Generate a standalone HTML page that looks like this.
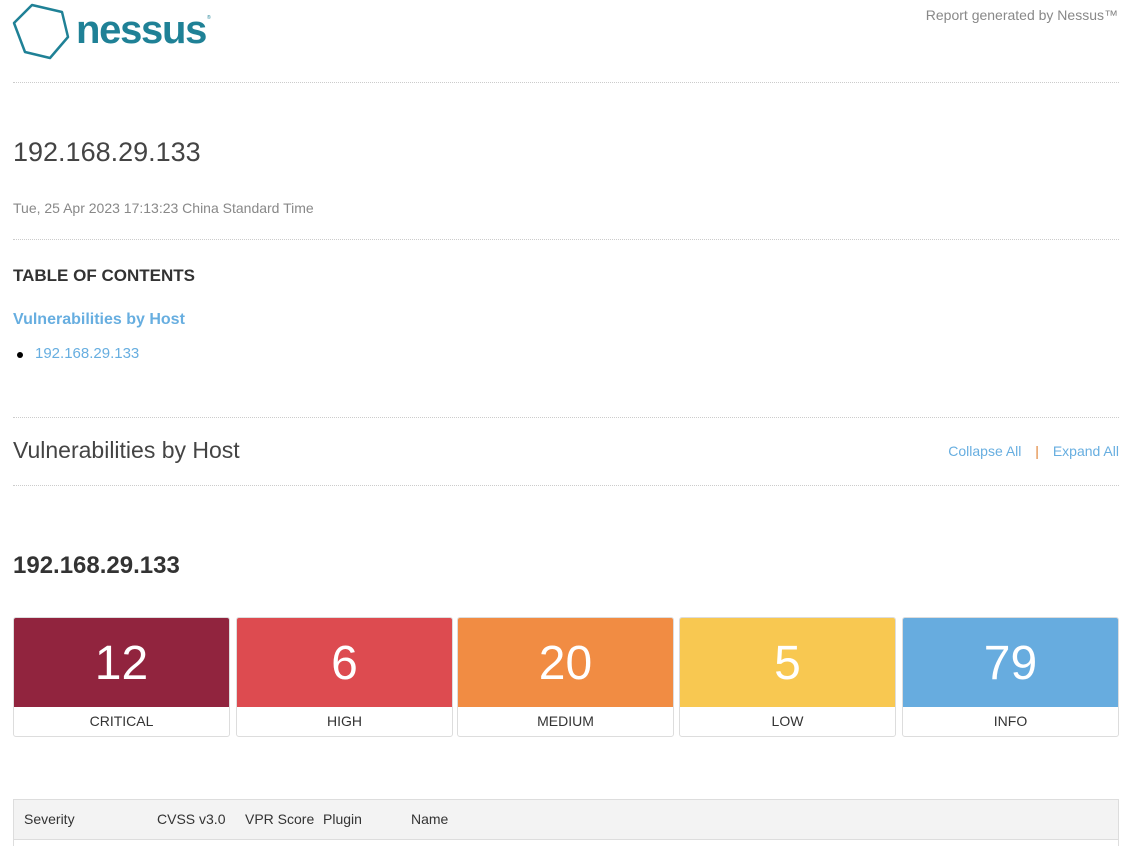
<!DOCTYPE html>
<html><head><meta charset="utf-8"><style>
*{margin:0;padding:0;box-sizing:border-box}
html,body{width:1121px;height:846px;overflow:hidden}
body{background:#fff;font-family:"Liberation Sans",sans-serif;color:#333;position:relative}
.a{position:absolute;white-space:nowrap}
.hr{position:absolute;left:13px;width:1106px;border-top:1px dotted #ccc}
.box{position:absolute;top:617px;width:217px;height:120px;border:1px solid #ddd;border-radius:3px;overflow:hidden}
.box .n{height:89px;color:#fff;font-size:48px;text-align:center;line-height:92px}
.box .l{font-size:14px;text-align:center;line-height:28px;color:#333}
.th{position:absolute;top:811px;font-size:14px;color:#333}
</style></head><body>
<svg class="a" style="left:0;top:0" width="75" height="65" viewBox="0 0 75 65"><polygon points="32,5 62,12 68,37 50,58 25,52 14,23" fill="none" stroke="#1f8196" stroke-width="2.5" stroke-linejoin="round"/></svg>
<div class="a" style="left:76px;top:8px;font-size:40px;font-weight:bold;color:#1f8196;letter-spacing:-1.3px">nessus</div>
<div class="a" style="left:207px;top:15px;font-size:5px;color:#1f8196">®</div>
<div class="a" style="right:3px;top:7px;font-size:14px;color:#888">Report generated by Nessus™</div>
<div class="hr" style="top:82px"></div>
<div class="a" style="left:13px;top:137px;font-size:27px;color:#444">192.168.29.133</div>
<div class="a" style="left:13px;top:200px;font-size:14px;color:#888">Tue, 25 Apr 2023 17:13:23 China Standard Time</div>
<div class="hr" style="top:239px"></div>
<div class="a" style="left:13px;top:266px;font-size:17px;font-weight:bold;color:#333">TABLE OF CONTENTS</div>
<div class="a" style="left:13px;top:311px;font-size:16px;font-weight:bold;color:#67aee0">Vulnerabilities by Host</div>
<div class="a" style="left:17px;top:352px;width:6px;height:6px;border-radius:3px;background:#000"></div>
<div class="a" style="left:35px;top:345px;font-size:15px;color:#67aee0">192.168.29.133</div>
<div class="hr" style="top:417px"></div>
<div class="a" style="left:13px;top:437px;font-size:23px;color:#444">Vulnerabilities by Host</div>
<div class="a" style="right:2px;top:443px;font-size:14px;color:#67aee0">Collapse All <span style="color:#e08030;margin:0 10px">|</span> Expand All</div>
<div class="hr" style="top:485px"></div>
<div class="a" style="left:13px;top:552px;font-size:24px;font-weight:bold;color:#333">192.168.29.133</div>
<div class="box" style="left:13px"><div class="n" style="background:#91243e">12</div><div class="l">CRITICAL</div></div>
<div class="box" style="left:236px"><div class="n" style="background:#dd4b50">6</div><div class="l">HIGH</div></div>
<div class="box" style="left:457px"><div class="n" style="background:#f18c43">20</div><div class="l">MEDIUM</div></div>
<div class="box" style="left:679px"><div class="n" style="background:#f8c851">5</div><div class="l">LOW</div></div>
<div class="box" style="left:902px"><div class="n" style="background:#67acdf">79</div><div class="l">INFO</div></div>
<div class="a" style="left:13px;top:799px;width:1106px;height:41px;background:#f3f3f3;border:1px solid #ddd"></div>
<div class="a" style="left:13px;top:840px;width:1106px;height:6px;background:#fff;border-left:1px solid #ddd;border-right:1px solid #ddd"></div>
<div class="th" style="left:24px">Severity</div>
<div class="th" style="left:157px">CVSS v3.0</div>
<div class="th" style="left:245px">VPR Score</div>
<div class="th" style="left:323px">Plugin</div>
<div class="th" style="left:411px">Name</div>
</body></html>
